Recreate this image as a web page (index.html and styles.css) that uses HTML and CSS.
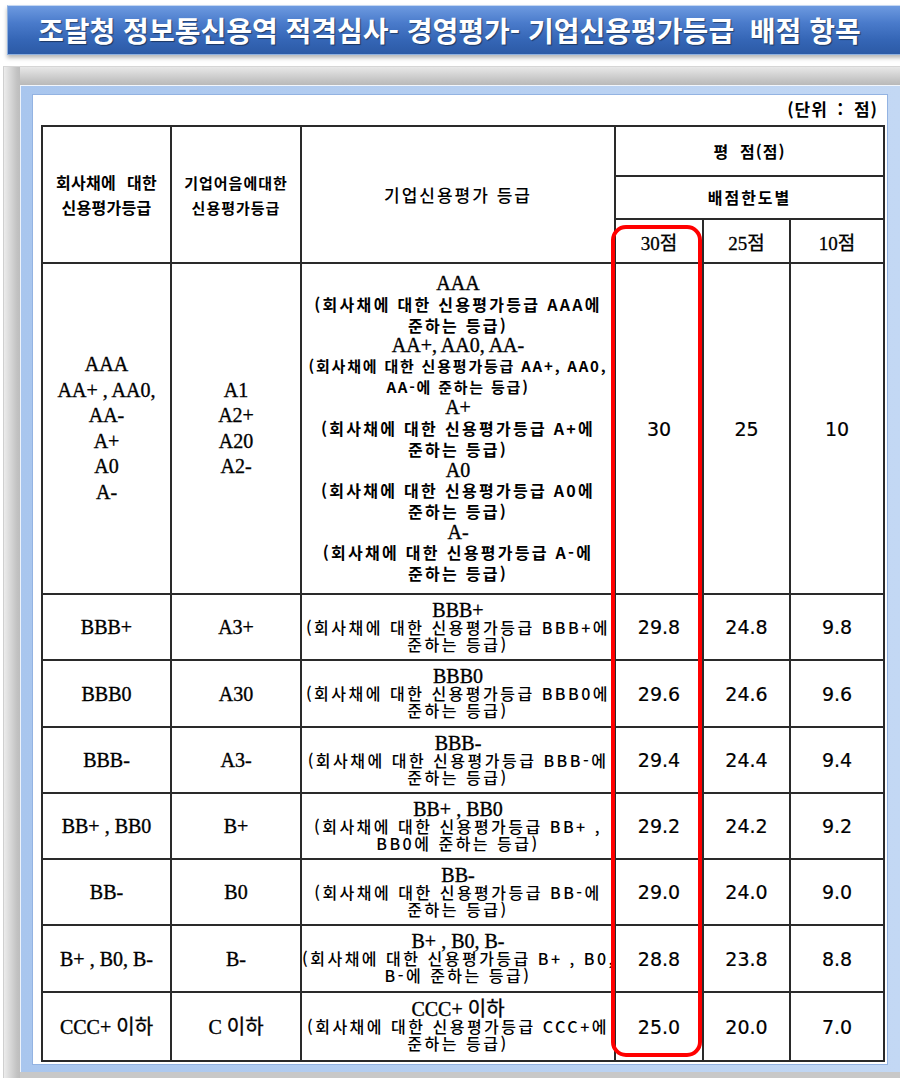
FILE: index.html
```html
<!DOCTYPE html>
<html lang="ko">
<head>
<meta charset="utf-8">
<title>조달청 정보통신용역 적격심사 - 기업신용평가등급 배점 항목</title>
<link rel="stylesheet" href="styles.css">
</head>
<body>
<div class="title">조달청 정보통신용역 적격심사- 경영평가- 기업신용평가등급&nbsp; 배점 항목</div>
<div class="frame">
  <div class="inner">
    <div class="panel">
      <div class="unit">(단위 : 점)</div>
      <div class="tablewrap">
        <table class="grid">
          <colgroup>
            <col class="c1"><col class="c2"><col class="c3"><col class="c4"><col class="c5"><col class="c6">
          </colgroup>
          <tr class="h1">
            <td rowspan="3" class="hd hd1"><div>회사채에 대한</div><div>신용평가등급</div></td>
            <td rowspan="3" class="hd hd2"><div>기업어음에대한</div><div>신용평가등급</div></td>
            <td rowspan="3" class="hd hd3">기업신용평가 등급</td>
            <td colspan="3" class="hd hd5">평&nbsp; 점(점)</td>
          </tr>
          <tr class="h2">
            <td colspan="3" class="hd hd4">배점한도별</td>
          </tr>
          <tr class="h3">
            <td class="pt">30점</td>
            <td class="pt">25점</td>
            <td class="pt">10점</td>
          </tr>
          <tr class="r1">
            <td class="big tall"><div>AAA</div><div>AA+ , AA0,</div><div>AA-</div><div>A+</div><div>A0</div><div>A-</div></td>
            <td class="big tall"><div>A1</div><div>A2+</div><div>A20</div><div>A2-</div></td>
            <td class="desc first">
              <div class="g">AAA</div>
              <div class="p">(회사채에 대한 신용평가등급 AAA에</div>
              <div class="p">준하는 등급)</div>
              <div class="g">AA+, AA0, AA-</div>
              <div class="p sm">(회사채에 대한 신용평가등급 AA+, AA0,</div>
              <div class="p sm">AA-에 준하는 등급)</div>
              <div class="g">A+</div>
              <div class="p">(회사채에 대한 신용평가등급 A+에</div>
              <div class="p">준하는 등급)</div>
              <div class="g">A0</div>
              <div class="p">(회사채에 대한 신용평가등급 A0에</div>
              <div class="p">준하는 등급)</div>
              <div class="g">A-</div>
              <div class="p">(회사채에 대한 신용평가등급 A-에</div>
              <div class="p">준하는 등급)</div>
            </td>
            <td class="num">30</td>
            <td class="num">25</td>
            <td class="num">10</td>
          </tr>
          <tr class="r2">
            <td class="big">BBB+</td>
            <td class="big">A3+</td>
            <td class="desc"><div class="g">BBB+</div><div class="p">(회사채에 대한 신용평가등급 BBB+에</div><div class="p">준하는 등급)</div></td>
            <td class="num">29.8</td><td class="num">24.8</td><td class="num">9.8</td>
          </tr>
          <tr class="r3">
            <td class="big">BBB0</td>
            <td class="big">A30</td>
            <td class="desc"><div class="g">BBB0</div><div class="p">(회사채에 대한 신용평가등급 BBB0에</div><div class="p">준하는 등급)</div></td>
            <td class="num">29.6</td><td class="num">24.6</td><td class="num">9.6</td>
          </tr>
          <tr class="r4">
            <td class="big">BBB-</td>
            <td class="big">A3-</td>
            <td class="desc"><div class="g">BBB-</div><div class="p">(회사채에 대한 신용평가등급 BBB-에</div><div class="p">준하는 등급)</div></td>
            <td class="num">29.4</td><td class="num">24.4</td><td class="num">9.4</td>
          </tr>
          <tr class="r5">
            <td class="big">BB+ , BB0</td>
            <td class="big">B+</td>
            <td class="desc"><div class="g">BB+ , BB0</div><div class="p">(회사채에 대한 신용평가등급 BB+ ,</div><div class="p">BB0에 준하는 등급)</div></td>
            <td class="num">29.2</td><td class="num">24.2</td><td class="num">9.2</td>
          </tr>
          <tr class="r6">
            <td class="big">BB-</td>
            <td class="big">B0</td>
            <td class="desc"><div class="g">BB-</div><div class="p">(회사채에 대한 신용평가등급 BB-에</div><div class="p">준하는 등급)</div></td>
            <td class="num">29.0</td><td class="num">24.0</td><td class="num">9.0</td>
          </tr>
          <tr class="r7">
            <td class="big">B+ , B0, B-</td>
            <td class="big">B-</td>
            <td class="desc"><div class="g">B+ , B0, B-</div><div class="p">(회사채에 대한 신용평가등급 B+ , B0,</div><div class="p">B-에 준하는 등급)</div></td>
            <td class="num">28.8</td><td class="num">23.8</td><td class="num">8.8</td>
          </tr>
          <tr class="r8">
            <td class="big">CCC+ 이하</td>
            <td class="big">C 이하</td>
            <td class="desc"><div class="g">CCC+ 이하</div><div class="p">(회사채에 대한 신용평가등급 CCC+에</div><div class="p">준하는 등급)</div></td>
            <td class="num">25.0</td><td class="num">20.0</td><td class="num">7.0</td>
          </tr>
        </table>
        <div class="highlight"></div>
      </div>
    </div>
  </div>
</div>
</body>
</html>
```
FILE: styles.css
```css
html, body {
  margin: 0;
  padding: 0;
}
body {
  width: 900px;
  height: 1078px;
  overflow: hidden;
  background: #ffffff;
  font-family: "Noto Sans CJK KR", sans-serif;
  color: #000;
}

.title {
  margin: 5px -30px 0 7px;
  height: 50px;
  box-sizing: border-box;
  padding-left: 30px;
  border: 1px solid #8fb0de;
  border-top-color: #c4d7f2;
  background: linear-gradient(to bottom, #6d9ae0 0%, #4a7bcb 35%, #3566b6 70%, #2c5aa6 100%);
  box-shadow: 0 3px 4px rgba(0, 0, 0, 0.28);
  color: #fff;
  font-family: "Noto Sans CJK KR", sans-serif;
  font-weight: 700;
  font-size: 28px;
  line-height: 48px;
  white-space: nowrap;
  text-shadow: 1px 1px 1px rgba(0, 0, 0, 0.45);
}

.frame {
  margin: 11px 0 0 3px;
  padding: 18px 0 12px 16px;
  background: linear-gradient(to right, #ececec 0, #c2c2c2 13px, #bdbdbd 16px, #c8c8c8 16px);
  border-top: 1px solid #d6d6d6;
  border-left: 1px solid #d0d0d0;
  position: relative;
}
.frame::before {
  content: "";
  position: absolute;
  left: 16px;
  right: 0;
  top: 0;
  height: 18px;
  background: linear-gradient(to bottom, #e8e8e8, #c6c6c6 70%, #b9b9b9);
}

.inner {
  position: relative;
  padding: 8px 12px 7px 11px;
  background: linear-gradient(to right, #a9c6ee, #c3d8f4);
  border-top: 1px solid #f2f6fc;
  border-left: 1px solid #eef3fb;
}

.panel {
  background: #fff;
  border: 1px solid #93b3e2;
  padding: 0 5px 2px 8px;
}

.unit {
  height: 30px;
  line-height: 27px;
  text-align: right;
  padding-right: 4px;
  font-family: "Noto Sans CJK KR", sans-serif;
  font-weight: 700;
  font-size: 17px;
  letter-spacing: 1px;
  word-spacing: 4px;
}

.tablewrap {
  position: relative;
}

.grid {
  width: 842px;
  table-layout: fixed;
  border-collapse: collapse;
  border: 2px solid #000;
}
.grid td {
  border: 2px solid #2a2a2a;
  padding: 0;
  text-align: center;
  vertical-align: middle;
  white-space: nowrap;
  overflow: visible;
}

.c1 { width: 129px; }
.c2 { width: 130px; }
.c3 { width: 314px; }
.c4 { width: 88px; }
.c5 { width: 87px; }
.c6 { width: 94px; }

.h1 { height: 50px; }
.h2 { height: 43px; }
.h3 { height: 44px; }
.r1 { height: 331px; }
.r2 { height: 66px; }
.r3 { height: 67px; }
.r4 { height: 66px; }
.r5 { height: 66px; }
.r6 { height: 66px; }
.r7 { height: 67px; }
.r8 { height: 69px; }

.hd {
  font-family: "Noto Sans CJK KR", sans-serif;
  font-weight: 700;
  font-size: 16px;
  line-height: 25px;
}
.hd1 { letter-spacing: 0.3px; word-spacing: 6px; }
.hd2 { font-size: 15px; letter-spacing: 1px; }
.hd3 {
  font-weight: 500;
  font-size: 17px;
  letter-spacing: 2px;
}
.hd4 { letter-spacing: 2px; }
.hd5 { letter-spacing: 1px; }

.pt {
  font-family: "Liberation Serif", "Noto Sans CJK KR", serif;
  font-size: 19px;
  -webkit-text-stroke: 0.3px #000;
}

.big {
  font-family: "Liberation Serif", "Noto Sans CJK KR", serif;
  font-size: 20px;
  line-height: 24px;
  -webkit-text-stroke: 0.35px #000;
}
.tall { line-height: 25.5px; }

.desc {
  line-height: 17px;
}
.desc.first { line-height: 20.7px; }
.desc .g {
  font-family: "Liberation Serif", "Noto Sans CJK KR", serif;
  font-size: 20px;
  -webkit-text-stroke: 0.35px #000;
}
.desc .p {
  font-family: "Noto Sans CJK KR", sans-serif;
  font-weight: 500;
  font-size: 16px;
  letter-spacing: 2.5px;
}
.desc.first .p {
  font-weight: 700;
  letter-spacing: 2.3px;
}
.desc.first .p.sm {
  font-size: 15px;
  letter-spacing: 1.8px;
}

.num {
  font-family: "DejaVu Sans", sans-serif;
  font-size: 19px;
  -webkit-text-stroke: 0.2px #000;
}

.highlight {
  position: absolute;
  left: 570px;
  top: 100px;
  width: 91px;
  height: 832px;
  box-sizing: border-box;
  border: 4px solid #ff0000;
  border-radius: 15px;
  pointer-events: none;
}
```
